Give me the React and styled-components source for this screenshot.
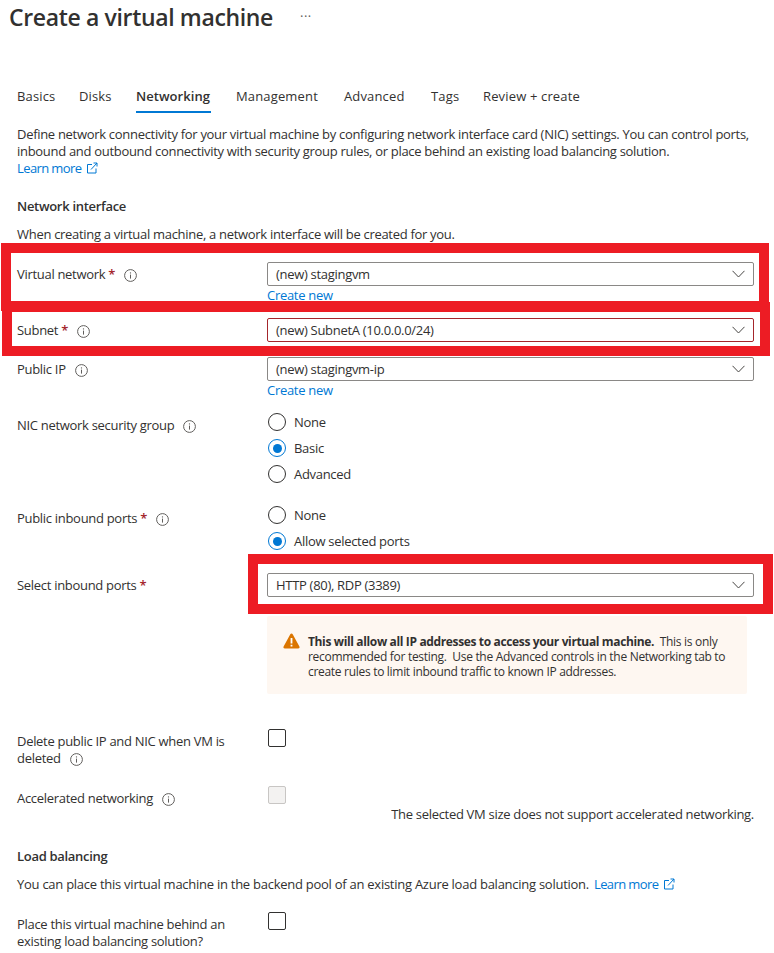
import React from 'react';
import styled, { createGlobalStyle } from 'styled-components';

const GlobalStyle = createGlobalStyle`
  html, body {
    margin: 0;
    background: #ffffff;
  }

  body {
    color: #323130;
    font-family: "Open Sans", "Liberation Sans", sans-serif;
    font-size: 13px;
    letter-spacing: -0.3px;
    line-height: 17px;
  }
`;

const Page = styled.div`
  box-sizing: border-box;
  height: 953px;
  overflow: hidden;
  padding: 0 20px 0 17px;
  position: relative;
  width: 774px;
`;

const TitleBar = styled.header`
  align-items: center;
  display: flex;
  height: 34px;
  margin-left: -8px;
`;

const Title = styled.h1`
  color: #323130;
  font-size: 23px;
  font-weight: 600;
  letter-spacing: -0.35px;
  line-height: 34px;
  margin: 0;
`;

const MoreDots = styled.span`
  color: #605e5c;
  font-size: 13px;
  letter-spacing: 0.5px;
  margin: 0 0 2px 27px;
`;

const Tabs = styled.nav`
  display: flex;
  height: 32px;
  margin-top: 47px;
`;

const Tab = styled.span`
  border-bottom: 2px solid ${(p) => (p.$active ? '#0078d4' : 'transparent')};
  box-sizing: border-box;
  font-weight: ${(p) => (p.$active ? 600 : 400)};
  letter-spacing: ${(p) => (p.$active ? '0.05px' : '0.15px')};
  margin-right: 25px;
  padding-top: 7px;
  white-space: nowrap;
  width: ${(p) => p.$width}px;
`;

const Paragraph = styled.p`
  letter-spacing: ${(p) => p.$spacing ?? -0.3}px;
  margin: ${(p) => p.$top}px 0 0;
`;

const Heading = styled.h2`
  font-size: 13px;
  font-weight: 600;
  line-height: 17px;
  margin: ${(p) => p.$top}px 0 0;
`;

const Link = styled.a`
  color: #0078d4;
  text-decoration: none;
`;

const LearnMore = styled(Link)`
  letter-spacing: -0.6px;
  margin-left: ${(p) => p.$gap ?? 0}px;
`;

const CreateNew = styled(Link)`
  display: block;
  margin-top: 1px;
`;

const Row = styled.div`
  display: grid;
  grid-template-columns: 250px 487px;
  margin-top: ${(p) => p.$top}px;
`;

const Label = styled.div`
  max-width: 216px;
  padding-top: 4px;
`;

const Required = styled.span`
  color: #a4262c;
  font-weight: 600;
  margin-left: 3px;
`;

const Info = styled.svg`
  height: 13px;
  margin-left: 9px;
  vertical-align: -3px;
  width: 13px;
`;

const Select = styled.div`
  align-items: center;
  border: 1px solid ${(p) => (p.$error ? '#a4262c' : '#8a8886')};
  border-radius: 2px;
  box-sizing: border-box;
  display: flex;
  height: 24px;
  justify-content: space-between;
  padding: 0 8px 0 8px;
`;

const SelectValue = styled.span`
  padding-top: 1px;
`;

const Chevron = styled.svg`
  height: 8px;
  width: 13px;
`;

const RadioGroup = styled.div`
  display: flex;
  flex-direction: column;
  gap: 8px;
`;

const RadioItem = styled.div`
  align-items: center;
  display: flex;
  gap: 8px;
  height: 18px;
  margin-left: 1px;
`;

const RadioCircle = styled.span`
  align-items: center;
  border: 1px solid ${(p) => (p.$on ? '#0078d4' : '#323130')};
  border-radius: 50%;
  box-sizing: border-box;
  display: flex;
  height: 18px;
  justify-content: center;
  width: 18px;

  &::after {
    background: #0078d4;
    border-radius: 50%;
    content: '';
    display: ${(p) => (p.$on ? 'block' : 'none')};
    height: 9px;
    width: 9px;
  }
`;

const Warning = styled.div`
  background: #fef7f1;
  border-radius: 2px;
  box-sizing: border-box;
  display: flex;
  font-size: 12px;
  gap: 8px;
  height: 78px;
  letter-spacing: -0.3px;
  line-height: 15px;
  margin: 19px 0 0 250px;
  padding: 18px 16px 0;
  width: 480px;
`;

const WarningTitle = styled.strong`
  letter-spacing: -0.36px;
`;

const WarningIcon = styled.svg`
  flex: none;
  height: 16px;
  margin-top: -1px;
  width: 17px;
`;

const Checkbox = styled.span`
  background: ${(p) => (p.$disabled ? '#f3f2f1' : '#ffffff')};
  border: 1px solid ${(p) => (p.$disabled ? '#c8c6c4' : '#323130')};
  border-radius: 2px;
  box-sizing: border-box;
  display: block;
  height: 18px;
  margin-left: 1px;
  width: 18px;
`;

const Note = styled.div`
  margin-top: 2px;
  text-align: right;
`;

const ExternalIcon = styled.svg`
  height: 12px;
  margin-left: 5px;
  vertical-align: -1px;
  width: 12px;
`;

/* annotation frames drawn on top of the form */
const RedFrame = styled.div`
  border: 10px solid #ed1c24;
  box-sizing: border-box;
  height: ${(p) => p.$h}px;
  left: ${(p) => p.$x}px;
  pointer-events: none;
  position: absolute;
  top: ${(p) => p.$y}px;
  width: ${(p) => p.$w}px;
`;

const InfoIcon = () => (
  <Info viewBox="0 0 13 13">
    <circle cx="6.5" cy="6.5" r="5.9" fill="none" stroke="#605e5c" strokeWidth="1" />
    <path d="M6.5 5.6v4" stroke="#605e5c" strokeWidth="1" />
    <circle cx="6.5" cy="3.9" r="0.65" fill="#605e5c" />
  </Info>
);

const External = () => (
  <ExternalIcon viewBox="0 0 12 12">
    <path
      d="M6 2.5H1.5v8.5H10V6.5M5 7.5L11 1M7.5 1H11v3.5"
      fill="none"
      stroke="#0078d4"
      strokeWidth="1"
    />
  </ExternalIcon>
);

const SelectBox = ({ value, error }) => (
  <Select $error={error}>
    <SelectValue>{value}</SelectValue>
    <Chevron viewBox="0 0 13 8">
      <path d="M0.5 0.8L6.5 7L12.5 0.8" fill="none" stroke="#484644" strokeWidth="1" />
    </Chevron>
  </Select>
);

const Radio = ({ on, children }) => (
  <RadioItem>
    <RadioCircle $on={on} />
    <span>{children}</span>
  </RadioItem>
);

const tabs = [
  { name: 'Basics', width: 37 },
  { name: 'Disks', width: 32 },
  { name: 'Networking', width: 75, active: true },
  { name: 'Management', width: 83 },
  { name: 'Advanced', width: 62 },
  { name: 'Tags', width: 27 },
  { name: 'Review + create', width: 98 },
];

const App = () => (
  <Page>
    <GlobalStyle />
    <TitleBar>
      <Title>Create a virtual machine</Title>
      <MoreDots>···</MoreDots>
    </TitleBar>
    <Tabs>
      {tabs.map((tab) => (
        <Tab key={tab.name} $active={tab.active} $width={tab.width}>
          {tab.name}
        </Tab>
      ))}
    </Tabs>
    <Paragraph $top={13}>
      Define network connectivity for your virtual machine by configuring network interface card (NIC) settings. You can control ports,
      <br />
      inbound and outbound connectivity with security group rules, or place behind an existing load balancing solution.
      <br />
      <LearnMore href="#">
        Learn more
        <External />
      </LearnMore>
    </Paragraph>
    <Heading $top={21}>Network interface</Heading>
    <Paragraph $top={11}>When creating a virtual machine, a network interface will be created for you.</Paragraph>

    <Row $top={19}>
      <Label>
        Virtual network<Required>*</Required>
        <InfoIcon />
      </Label>
      <div>
        <SelectBox value="(new) stagingvm" />
        <CreateNew href="#">Create new</CreateNew>
      </div>
    </Row>
    <Row $top={14}>
      <Label>
        Subnet<Required>*</Required>
        <InfoIcon />
      </Label>
      <SelectBox value="(new) SubnetA (10.0.0.0/24)" error />
    </Row>
    <Row $top={15}>
      <Label>
        Public IP
        <InfoIcon />
      </Label>
      <div>
        <SelectBox value="(new) stagingvm-ip" />
        <CreateNew href="#">Create new</CreateNew>
      </div>
    </Row>
    <Row $top={14}>
      <Label>
        NIC network security group
        <InfoIcon />
      </Label>
      <RadioGroup>
        <Radio>None</Radio>
        <Radio on>Basic</Radio>
        <Radio>Advanced</Radio>
      </RadioGroup>
    </Row>
    <Row $top={23}>
      <Label>
        Public inbound ports<Required>*</Required>
        <InfoIcon />
      </Label>
      <RadioGroup>
        <Radio>None</Radio>
        <Radio on>Allow selected ports</Radio>
      </RadioGroup>
    </Row>
    <Row $top={23}>
      <Label>
        Select inbound ports<Required>*</Required>
      </Label>
      <SelectBox value="HTTP (80), RDP (3389)" />
    </Row>
    <Warning>
      <WarningIcon viewBox="0 0 17 16">
        <path
          d="M8.5 0.5c.5 0 .9.3 1.2.7l6.7 12.4c.5 1-.1 2-1.2 2H1.8c-1.1 0-1.7-1-1.2-2L7.3 1.2c.3-.4.7-.7 1.2-.7z"
          fill="#db7500"
        />
        <path d="M7.6 5h1.8v5.6H7.6zM7.6 11.8h1.8v1.8H7.6z" fill="#ffffff" />
      </WarningIcon>
      <div>
        <WarningTitle>This will allow all IP addresses to access your virtual machine.</WarningTitle>
        {'\u00a0 '}This is only recommended for testing.{'\u00a0 '}Use the Advanced controls in the Networking tab to create rules to limit inbound traffic to known IP addresses.
      </div>
    </Warning>
    <Row $top={35}>
      <Label>
        Delete public IP and NIC when VM is deleted
        <InfoIcon />
      </Label>
      <Checkbox />
    </Row>
    <Row $top={19}>
      <Label>
        Accelerated networking
        <InfoIcon />
      </Label>
      <div>
        <Checkbox $disabled />
        <Note>The selected VM size does not support accelerated networking.</Note>
      </div>
    </Row>
    <Heading $top={25}>Load balancing</Heading>
    <Paragraph $top={11} $spacing={-0.26}>
      You can place this virtual machine in the backend pool of an existing Azure load balancing solution.
      <LearnMore href="#" $gap={5}>
        Learn more
        <External />
      </LearnMore>
    </Paragraph>
    <Row $top={19}>
      <Label>Place this virtual machine behind an existing load balancing solution?</Label>
      <Checkbox />
    </Row>

    <RedFrame $x={1} $y={243} $w={768} $h={68} />
    <RedFrame $x={2} $y={302} $w={768} $h={54} />
    <RedFrame $x={248} $y={554} $w={525} $h={60} />
  </Page>
);

export default App;
